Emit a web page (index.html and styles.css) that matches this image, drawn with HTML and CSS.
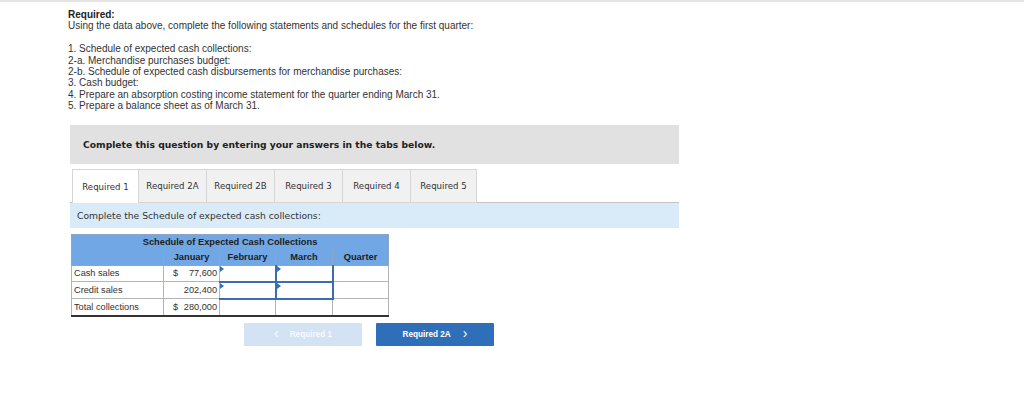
FILE: index.html
```html
<!DOCTYPE html>
<html>
<head>
<meta charset="utf-8">
<link rel="stylesheet" href="styles.css">
</head>
<body>
<div class="topline"></div>
<div class="page">
  <div class="req">
    <p class="req-title">Required:</p>
    <p>Using the data above, complete the following statements and schedules for the first quarter:</p>
    <p class="blank">&nbsp;</p>
    <p>1. Schedule of expected cash collections:</p>
    <p>2-a. Merchandise purchases budget:</p>
    <p>2-b. Schedule of expected cash disbursements for merchandise purchases:</p>
    <p>3. Cash budget:</p>
    <p>4. Prepare an absorption costing income statement for the quarter ending March 31.</p>
    <p>5. Prepare a balance sheet as of March 31.</p>
  </div>

  <div class="panel">
    <div class="instr">Complete this question by entering your answers in the tabs below.</div>
    <div class="tabs">
      <div class="tab active">Required 1</div>
      <div class="tab">Required 2A</div>
      <div class="tab">Required 2B</div>
      <div class="tab">Required 3</div>
      <div class="tab">Required 4</div>
      <div class="tab last">Required 5</div>
    </div>
    <div class="prompt">Complete the Schedule of expected cash collections:</div>

    <table class="sched">
      <colgroup>
        <col class="c-lbl">
        <col class="c-m">
        <col class="c-m">
        <col class="c-m3">
        <col class="c-m">
      </colgroup>
      <tr class="h1"><th colspan="5" class="ttl">Schedule of Expected Cash Collections</th></tr>
      <tr class="h2"><th class="blankh2"></th><th>January</th><th>February</th><th>March</th><th>Quarter</th></tr>
      <tr>
        <td class="lbl">Cash sales</td>
        <td class="num"><span class="cur">$</span>77,600</td>
        <td class="inp"><span class="flag"></span></td>
        <td class="inp"><span class="flag"></span></td>
        <td></td>
      </tr>
      <tr>
        <td class="lbl">Credit sales</td>
        <td class="num">202,400</td>
        <td class="inp"><span class="flag"></span></td>
        <td class="inp"><span class="flag"></span></td>
        <td></td>
      </tr>
      <tr class="tot">
        <td class="lbl">Total collections</td>
        <td class="num"><span class="cur">$</span>280,000</td>
        <td></td>
        <td></td>
        <td></td>
      </tr>
    </table>

    <div class="nav">
      <div class="btn prev"><span class="chev left">&lsaquo;</span>Required 1</div>
      <div class="btn next">Required 2A<span class="chev right">&rsaquo;</span></div>
    </div>
  </div>
</div>
</body>
</html>
```

FILE: styles.css
```css
html, body {
  margin: 0;
  padding: 0;
  background: #ffffff;
}

.topline {
  height: 2px;
  background: #e4e4e4;
}

.page {
  padding: 7px 0 0 68px;
  font-family: "Liberation Sans", Arial, sans-serif;
  color: #333333;
}

.req p {
  margin: 0;
  font-size: 10px;
  line-height: 11.4px;
}

.req .req-title {
  font-weight: bold;
  color: #222222;
}

.panel {
  margin-top: 13px;
  margin-left: 2px;
  width: 609px;
}

.instr {
  background: #e1e1e1;
  height: 39px;
  box-sizing: border-box;
  padding: 0 13px;
  display: flex;
  align-items: center;
  font-family: "DejaVu Sans", Verdana, sans-serif;
  font-weight: bold;
  font-size: 9.2px;
  color: #222222;
}

.tabs {
  margin-top: 5px;
  display: flex;
  border-bottom: 1px solid #c4c4c4;
  height: 34px;
  box-sizing: border-box;
  padding-left: 2px;
}

.tab {
  width: 68px;
  height: 34px;
  box-sizing: border-box;
  background: #f1f1f1;
  border: 1px solid #d6d6d6;
  border-left: none;
  display: flex;
  align-items: center;
  justify-content: center;
  font-family: "DejaVu Sans", Verdana, sans-serif;
  font-size: 8.6px;
  color: #333333;
  padding-top: 1px;
}

.tab.active {
  background: #ffffff;
  border-left: 1px solid #d6d6d6;
  margin-bottom: -1px;
  border-bottom: none;
  width: 67px;
}

.tab.last {
  width: 66px;
}

.prompt {
  background: #d9ebf9;
  height: 25px;
  display: flex;
  align-items: center;
  padding-left: 7px;
  font-family: "DejaVu Sans", Verdana, sans-serif;
  font-size: 9.2px;
  color: #333333;
}

.sched {
  margin-top: 6px;
  margin-left: 1px;
  width: 317px;
  border-collapse: collapse;
  font-family: "Liberation Sans", Arial, sans-serif;
  font-size: 9.2px;
  color: #333333;
  table-layout: fixed;
}

.sched col.c-lbl { width: 92px; }
.sched col.c-m { width: 56px; }
.sched col.c-m3 { width: 57px; }

.sched th {
  background: #71a7e4;
  color: #1e1e1e;
  font-weight: bold;
  font-size: 9.3px;
  height: 15px;
  padding: 0;
  border: 1px solid #8ea6c2;
  text-align: center;
}

.sched .h1 th {
  border-bottom: none;
}

.sched .h2 th {
  border-top: none;
}

.sched td {
  height: 15px;
  padding: 0;
  border: 1px solid #b4b4b4;
  background: #ffffff;
  white-space: nowrap;
}

.sched td.lbl {
  padding-left: 2px;
  color: #333333;
}

.sched td.num {
  text-align: right;
  padding-right: 2px;
}

.sched td.num .cur {
  float: left;
  padding-left: 9px;
}

.sched td.inp {
  position: relative;
  border: 1px solid #9fb6d4;
  border-bottom: 2px solid #3a6db4;
  border-right: 2px solid #3a6db4;
}

.flag {
  position: absolute;
  left: 0;
  top: 0;
  width: 0;
  height: 0;
  border-top: 3px solid transparent;
  border-bottom: 3px solid transparent;
  border-left: 4px solid #3a6db4;
}

.sched tr.tot td {
  border-bottom: 2px solid #333333;
}

.sched tr.tot td.num {
  border-top: 1px solid #666666;
}

.nav {
  margin-top: 6px;
  margin-left: 174px;
  display: flex;
  gap: 14px;
}

.btn {
  width: 118px;
  height: 23px;
  display: flex;
  align-items: center;
  justify-content: center;
  font-family: "Liberation Sans", Arial, sans-serif;
  font-weight: bold;
  font-size: 8.2px;
  color: #ffffff;
  border-radius: 1px;
}

.btn .chev {
  font-size: 14px;
  font-weight: normal;
  line-height: 1;
  position: relative;
  top: -1px;
}

.btn .chev.left {
  margin-right: 11px;
}

.btn .chev.right {
  margin-left: 12px;
}

.btn.prev {
  background: #d4e3f3;
  color: #f6f9fd;
}

.btn.next {
  background: #2f6fba;
}
```
